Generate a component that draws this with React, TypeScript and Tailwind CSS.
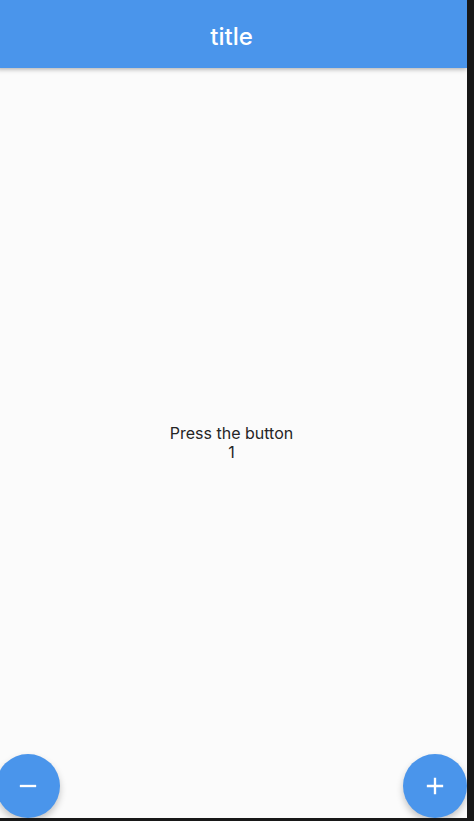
import { useState } from "react";

const fabClass =
  "flex size-16 items-center justify-center rounded-full bg-[#4a95eb] text-white shadow-[0_4px_7px_rgba(0,0,0,0.22)]";

export default function App() {
  const [count, setCount] = useState(1);

  return (
    <div className="flex min-h-screen overflow-hidden bg-[#181818] pr-[7px] pb-[3px] font-['Inter','Liberation_Sans',sans-serif]">
      <div className="flex flex-1 overflow-hidden bg-[#fbfbfb]">
        <div className="-ml-1 flex flex-1 flex-col">
          <header className="flex h-[68px] items-center justify-center bg-[#4a95eb] pt-1.5 shadow-[0_1px_5px_rgba(0,0,0,0.35)]">
            <h1 className="text-2xl leading-7 font-medium text-white">title</h1>
          </header>
          <main className="flex flex-1 flex-col">
            <div className="flex flex-1 flex-col items-center justify-center pt-16 text-base leading-[19px] text-[#252525]">
              <p>Press the button</p>
              <output>{count}</output>
            </div>
            <div className="flex justify-between">
              <button
                type="button"
                aria-label="Decrement"
                className={fabClass}
                onClick={() => setCount(count - 1)}
              >
                <svg viewBox="0 0 24 24" className="size-7" fill="currentColor" aria-hidden="true">
                  <path d="M19 13H5v-2h14v2z" />
                </svg>
              </button>
              <button
                type="button"
                aria-label="Increment"
                className={fabClass}
                onClick={() => setCount(count + 1)}
              >
                <svg viewBox="0 0 24 24" className="size-7" fill="currentColor" aria-hidden="true">
                  <path d="M19 13h-6v6h-2v-6H5v-2h6V5h2v6h6v2z" />
                </svg>
              </button>
            </div>
          </main>
        </div>
      </div>
    </div>
  );
}
